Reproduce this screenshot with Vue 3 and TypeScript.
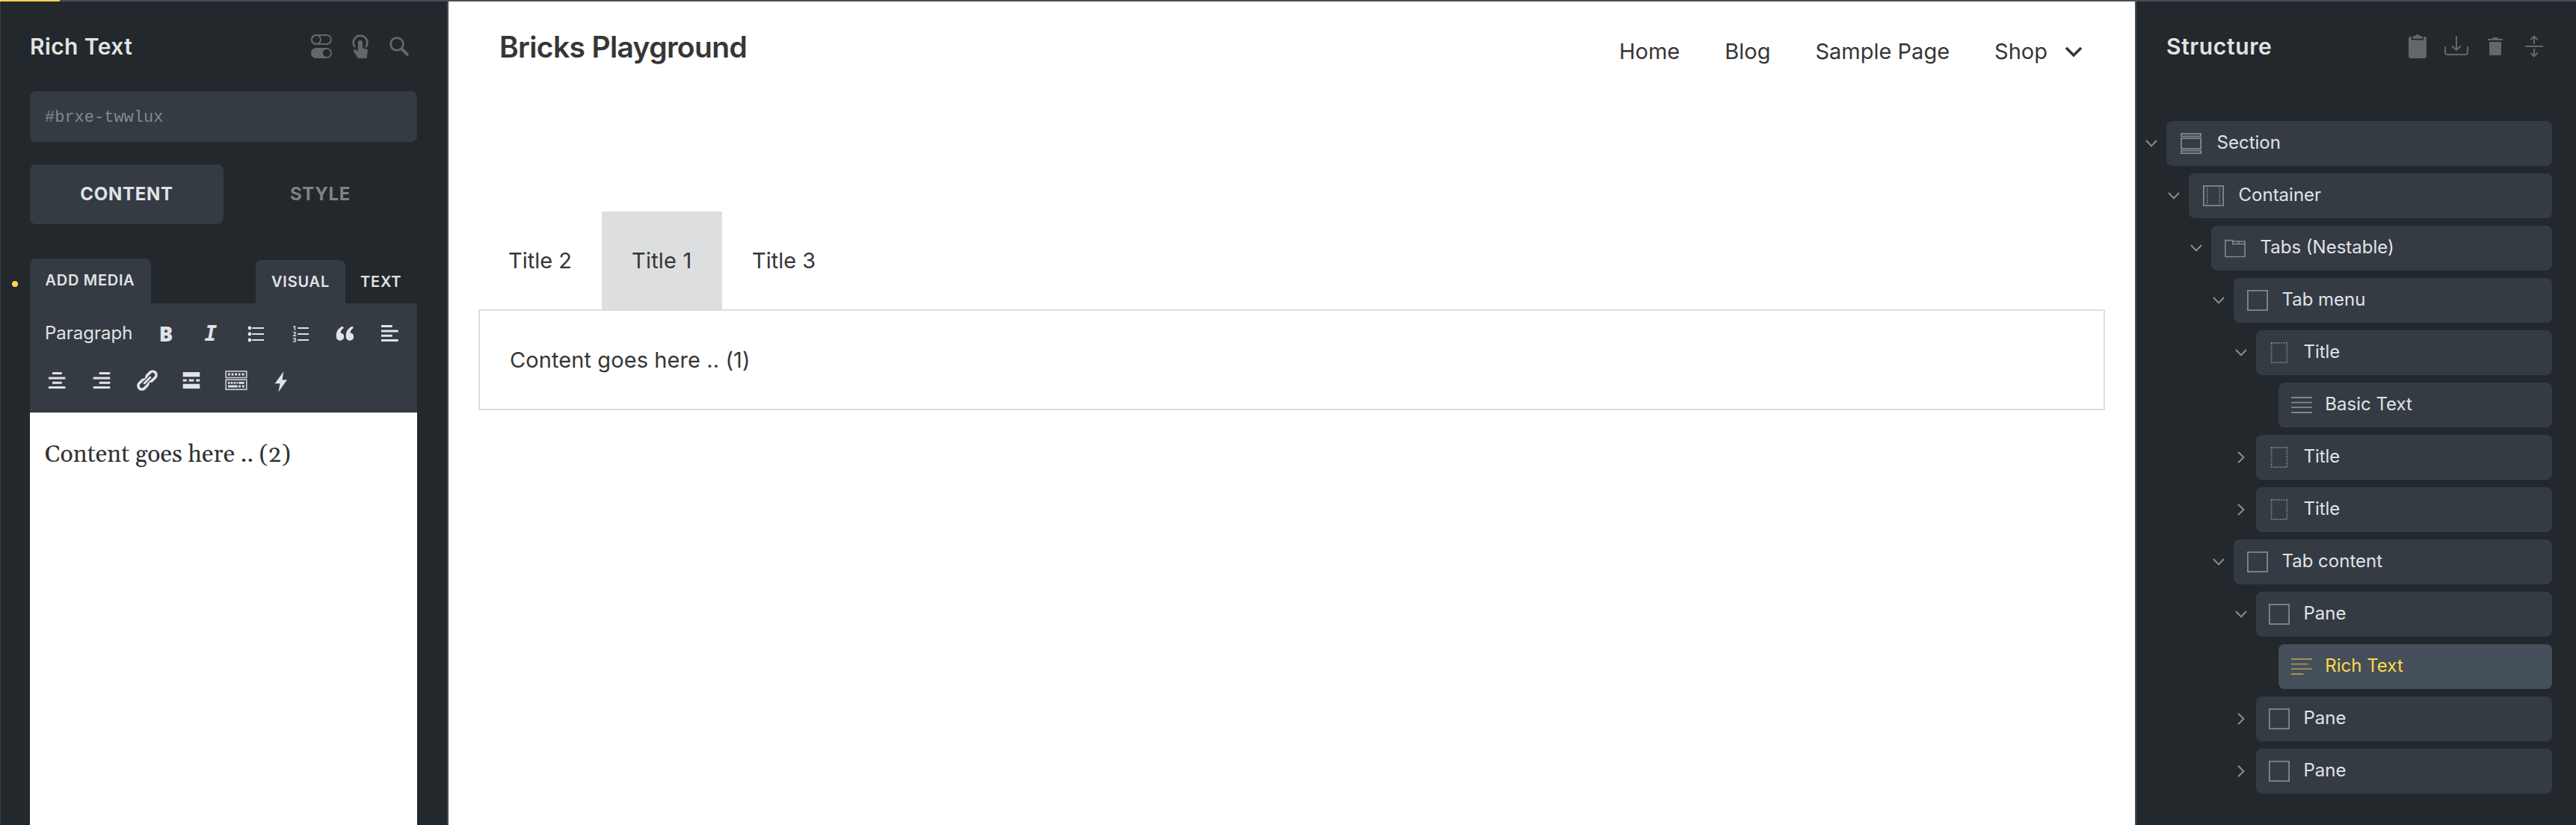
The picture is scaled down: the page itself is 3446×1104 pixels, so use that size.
<script setup lang="ts">
type IconName = 'section' | 'container' | 'tabs' | 'block' | 'div' | 'text' | 'rich'

interface TreeNode {
  label: string
  icon: IconName
  level: number
  toggle?: 'open' | 'closed'
  active?: boolean
}

const tree: TreeNode[] = [
  { label: 'Section', icon: 'section', level: 0, toggle: 'open' },
  { label: 'Container', icon: 'container', level: 1, toggle: 'open' },
  { label: 'Tabs (Nestable)', icon: 'tabs', level: 2, toggle: 'open' },
  { label: 'Tab menu', icon: 'block', level: 3, toggle: 'open' },
  { label: 'Title', icon: 'div', level: 4, toggle: 'open' },
  { label: 'Basic Text', icon: 'text', level: 5 },
  { label: 'Title', icon: 'div', level: 4, toggle: 'closed' },
  { label: 'Title', icon: 'div', level: 4, toggle: 'closed' },
  { label: 'Tab content', icon: 'block', level: 3, toggle: 'open' },
  { label: 'Pane', icon: 'block', level: 4, toggle: 'open' },
  { label: 'Rich Text', icon: 'rich', level: 5, active: true },
  { label: 'Pane', icon: 'block', level: 4, toggle: 'closed' },
  { label: 'Pane', icon: 'block', level: 4, toggle: 'closed' },
]

const navItems = ['Home', 'Blog', 'Sample Page', 'Shop']
const siteTabs = [
  { label: 'Title 2', active: false },
  { label: 'Title 1', active: true },
  { label: 'Title 3', active: false },
]
</script>

<template>
  <div class="builder">
    <div class="progress"><div class="progress-fill"></div></div>

    <div class="columns">
      <aside class="panel">
        <header class="panel-head">
          <h2 class="panel-title rich">Rich Text</h2>
          <div class="head-icons">
            <svg width="28" height="32" viewBox="0 0 28 32">
              <rect x="1" y="1" width="26" height="12" rx="6" class="line2" />
              <circle cx="7" cy="7" r="6" class="line2" />
              <rect x="0" y="18" width="28" height="14" rx="7" class="fill" />
              <circle cx="21" cy="25" r="5" class="hole" />
            </svg>
            <svg class="hand" width="22" height="32" viewBox="0 0 22 32">
              <path d="M4 17.1A9.3 9.3 0 1 1 18 17.1" class="line3" />
              <path d="M7.8 11a3.1 3.1 0 0 1 6.2 0v7.2l5.2 1.4q2 .6 1.7 2.8L19.6 32H8L2 22.8q-1-2.2.8-2.8 1.8-.4 3 1.2l2 2.2z" class="fill" />
            </svg>
            <svg class="search" width="26" height="32" viewBox="0 0 26 32">
              <circle cx="10" cy="13" r="8.4" class="line3" />
              <path d="M16 19l9 9" class="line4" />
            </svg>
          </div>
        </header>

        <div class="panel-body">
          <div class="id-field">#brxe-twwlux</div>

          <div class="mode-tabs">
            <div class="mode-tab on">CONTENT</div>
            <div class="mode-tab">STYLE</div>
          </div>

          <div class="editor">
            <span class="dot"></span>
            <div class="editor-tabs">
              <div class="etab media">ADD MEDIA</div>
              <div class="etab visual">VISUAL</div>
              <div class="etab text">TEXT</div>
            </div>

            <div class="toolbar">
              <div class="tool-row">
                <div class="format">Paragraph</div>
                <div class="tool bold">B</div>
                <div class="tool italic">I</div>
                <div class="tool">
                  <svg width="40" height="40" viewBox="0 0 40 40">
                    <circle v-for="y in [12, 20, 28]" :key="y" cx="12" :cy="y" r="2.4" class="ink" />
                    <path d="M15.3 12H31M15.3 20H31M15.3 28H31" class="ink-line" />
                  </svg>
                </div>
                <div class="tool">
                  <svg width="40" height="40" viewBox="0 0 40 40">
                    <text v-for="n in 3" :key="n" x="12" :y="7 + n * 8" class="num">{{ n }}</text>
                    <path d="M16.3 12H31M16.3 20H31M16.3 28H31" class="ink-line" />
                  </svg>
                </div>
                <div class="tool">
                  <svg width="40" height="40" viewBox="0 0 40 40">
                    <path v-for="x in [0, 13]" :key="x" :transform="`translate(${x} 0)`" d="M16.4 9.6C10.4 12 7.7 17 7.7 22.8c0 3.8 2.2 6 5.2 6a5.3 5.3 0 0 0 5.3-5.3c0-2.8-1.9-4.8-4.6-5 .2-3 1.7-5 4.2-6.6z" class="ink" />
                  </svg>
                </div>
                <div class="tool">
                  <svg width="40" height="40" viewBox="0 0 40 40">
                    <path d="M8 9.5h14.7M8 16h22.7M8 22.2h14.7M8 28.6h22.7" class="bar" />
                  </svg>
                </div>
              </div>
              <div class="tool-row">
                <div class="tool">
                  <svg width="40" height="40" viewBox="0 0 40 40">
                    <path d="M14 10.5h12.7M9 17h22.3M14 23.2h12.7M9 29.6h22.3" class="bar" />
                  </svg>
                </div>
                <div class="tool">
                  <svg width="40" height="40" viewBox="0 0 40 40">
                    <path d="M16.7 10.5h14.6M8.7 17h22.6M16.7 23.2h14.6M8.7 29.6h22.6" class="bar" />
                  </svg>
                </div>
                <div class="tool">
                  <svg width="40" height="40" viewBox="0 0 40 40">
                    <g transform="rotate(-45 21 20)">
                      <rect x="6" y="15.2" width="14.8" height="9.6" rx="4.8" class="chain" />
                      <rect x="21.2" y="15.2" width="14.8" height="9.6" rx="4.8" class="chain" />
                      <path d="M15.5 20h11" class="chain-gap" />
                      <path d="M15.5 20h11" class="chain-bar" />
                    </g>
                  </svg>
                </div>
                <div class="tool">
                  <svg width="40" height="40" viewBox="0 0 40 40">
                    <path d="M8.7 9h22.6v6.2H8.7zM8.7 18.6h5v3h-5zM16.6 18.6h6.8v3h-6.8zM26.3 18.6h5v3h-5zM8.7 24.8h22.6V31H8.7z" class="ink" />
                  </svg>
                </div>
                <div class="tool">
                  <svg width="40" height="40" viewBox="0 0 40 40">
                    <rect x="6.2" y="7.8" width="27.6" height="8.6" class="key-frame" />
                    <rect x="6.2" y="19.2" width="27.6" height="13" class="key-frame" />
                    <path d="M9 10.6h2.8v3H9zM13.6 10.6h2.8v3h-2.8zM18.2 10.6H21v3h-2.8zM22.8 10.6h2.8v3h-2.8zM27.6 10.6h3v3h-3zM9 22h2.6v2.8H9zM12.8 22h2.6v2.8h-2.6zM16.6 22h2.6v2.8h-2.6zM20.4 22h1.6v2.8h-1.6zM23.2 22h7.5v2.8h-7.5zM9 26.6h12.8v2.8H9zM23.2 26.6h2.8v2.8h-2.8zM27.8 26.6h2.9v2.8h-2.9z" class="ink" />
                  </svg>
                </div>
                <div class="tool">
                  <svg width="40" height="40" viewBox="0 0 40 40">
                    <path d="M23.5 8L11.7 24.2h6.9L16.4 35.8 28 19.2h-6.4z" class="ink" />
                  </svg>
                </div>
              </div>
            </div>

            <div class="document">Content goes here .. (2)</div>
          </div>
        </div>
      </aside>

      <main class="canvas">
        <header class="site-head">
          <div class="brand">Bricks Playground</div>
          <nav class="nav">
            <a v-for="item in navItems" :key="item">{{ item }}</a>
            <svg class="caret" width="24" height="16" viewBox="0 0 24 16">
              <path d="M2 3l10 10L22 3" />
            </svg>
          </nav>
        </header>
        <section class="site-tabs">
          <div class="tab-menu">
            <div v-for="t in siteTabs" :key="t.label" class="tab-title" :class="{ on: t.active }">{{ t.label }}</div>
          </div>
          <div class="tab-pane">Content goes here .. (1)</div>
        </section>
      </main>

      <aside class="structure">
        <header class="structure-head">
          <h2 class="panel-title struct">Structure</h2>
          <div class="head-icons">
            <svg width="24" height="32" viewBox="0 0 24 32">
              <rect x="0" y="3" width="24" height="29" rx="2.4" class="fill" />
              <path d="M4.6 2v4.6h14.8V2" class="cut" />
              <path d="M5.8 5V3.4Q5.8 2 7.6 2h1.6Q10 0 12 0t2.8 2h1.6q1.8 0 1.8 1.4V5z" class="fill" />
            </svg>
            <svg class="download" width="32" height="32" viewBox="0 0 32 32">
              <path d="M16 2v19M10 15.2l6 6 6-6M1 16v8q0 3 3 3h24q3 0 3-3v-8" class="line2" />
            </svg>
            <svg class="trash" width="20" height="32" viewBox="0 0 20 32">
              <path d="M0 6h5.4q1-2 3-2h3.2q2 0 3 2H20v2H0zM2 10h16v15.4q0 2.6-2.6 2.6H4.6Q2 28 2 25.4z" class="fill" />
            </svg>
            <svg class="expand" width="24" height="32" viewBox="0 0 24 32">
              <path d="M0 16h24M12 13V3M7.4 7.2L12 2.6l4.6 4.6M12 19v10M7.4 24.8l4.6 4.6 4.6-4.6" class="line2" />
            </svg>
          </div>
        </header>

        <ul class="tree">
          <li v-for="(node, i) in tree" :key="i" class="node" :style="{ '--level': node.level }">
            <span class="toggle">
              <svg v-if="node.toggle === 'open'" width="18" height="18" viewBox="0 0 18 18"><path d="M2 5l7 7.4L16 5" /></svg>
              <svg v-else-if="node.toggle === 'closed'" width="18" height="18" viewBox="0 0 18 18"><path d="M5 1.8L12.4 9 5 16.2" /></svg>
            </span>
            <div class="item" :class="{ active: node.active }">
              <svg class="item-icon" width="28" height="28" viewBox="0 0 28 28">
                <path v-if="node.icon === 'section'" d="M.9.9h26.2v3.4H.9zM.9 7.2h26.2v13.6H.9zM.9 23.7h26.2v3.4H.9z" />
                <template v-else-if="node.icon === 'container'">
                  <path d="M.9.9h26.2v26.2H.9z" />
                  <path d="M5.7 3.5v21.4M22.3 3.5v21.4" class="dots" />
                </template>
                <path v-else-if="node.icon === 'tabs'" d="M.9 3.6h9.9v4.9h16.3v17H.9zM10.8 5h16.3v4M19 5v3.5" class="thin" />
                <path v-else-if="node.icon === 'block'" d="M.9.9h26.2v26.2H.9z" />
                <path v-else-if="node.icon === 'div'" d="M3.6.8h20.8v26.4H3.6z" class="dots" />
                <path v-else-if="node.icon === 'text'" d="M0 4h28M0 10.6h28M0 17.2h28M0 24h28" />
                <path v-else d="M0 4h28M0 10.6h23M0 17.2h28M0 24h16.4" />
              </svg>
              <span>{{ node.label }}</span>
            </div>
          </li>
        </ul>
      </aside>
    </div>
  </div>
</template>

<style>
body {
  margin: 0;
  background: #fff;
}
</style>

<style scoped>
.builder {
  display: flex;
  flex-direction: column;
  width: 3446px;
  height: 1104px;
  overflow: hidden;
  font-family: Inter, "Liberation Sans", sans-serif;
  color: #e1e3e4;
}
.progress {
  height: 2px;
  background: #454f59;
}
.progress-fill {
  width: 80px;
  height: 2px;
  background: #ffd64f;
}
.columns {
  flex: 1;
  display: flex;
  min-height: 0;
}
svg {
  display: block;
}

/* shared header */
.panel-title {
  margin: 0;
  font-size: 30px;
  line-height: 40px;
  font-weight: 600;
  letter-spacing: 0.4px;
}
.panel-title.struct {
  letter-spacing: 0.62px;
}
.head-icons {
  display: flex;
  align-items: center;
}
.fill {
  fill: #62676a;
}
.hole {
  fill: #23282c;
}
.line2,
.line3,
.line4 {
  fill: none;
  stroke: #62676a;
  stroke-width: 2;
}
.line3 {
  stroke-width: 2.8;
}
.line4 {
  stroke-width: 4;
}
.cut {
  fill: none;
  stroke: #23282c;
  stroke-width: 1.6;
}

/* left panel */
.panel {
  box-sizing: border-box;
  width: 600px;
  flex: none;
  display: flex;
  flex-direction: column;
  background: #23282c;
  border-left: 1px solid #363f46;
  border-right: 2px solid #454f59;
}
.panel-head {
  display: flex;
  align-items: center;
  justify-content: space-between;
  height: 120px;
  padding: 0 51px 0 39px;
}
.hand {
  margin-left: 27px;
}
.search {
  margin-left: 28px;
}
.panel-body {
  flex: 1;
  display: flex;
  flex-direction: column;
  padding: 0 40px 0 39px;
}
.id-field {
  box-sizing: border-box;
  height: 68px;
  padding: 3px 20px 0;
  border-radius: 8px;
  background: #343b43;
  color: #84898d;
  font: 22px/65px "Liberation Mono", monospace;
}
.mode-tabs {
  display: flex;
  margin-top: 30px;
  height: 80px;
}
.mode-tab {
  flex: 1;
  border-radius: 8px;
  text-align: center;
  font-size: 24px;
  line-height: 79px;
  font-weight: 700;
  letter-spacing: 0.7px;
  color: #7f8386;
}
.mode-tab.on {
  background: #343b43;
  color: #e1e3e4;
}
.editor {
  position: relative;
  flex: 1;
  display: flex;
  flex-direction: column;
  margin-top: 46px;
}
.dot {
  position: absolute;
  left: -24px;
  top: 30px;
  width: 8px;
  height: 8px;
  border-radius: 50%;
  background: #ffd64f;
}
.editor-tabs {
  display: flex;
  align-items: flex-end;
  height: 60px;
}
.etab {
  box-sizing: border-box;
  height: 58px;
  border-radius: 8px 8px 0 0;
  font-size: 20px;
  line-height: 59px;
  font-weight: 600;
  letter-spacing: 0.8px;
}
.media {
  width: 162px;
  height: 60px;
  margin-right: auto;
  padding-left: 20.5px;
  letter-spacing: 0.7px;
  background: #343b43;
}
.visual {
  width: 120px;
  padding-left: 21px;
  background: #343b43;
}
.text {
  width: 96px;
  padding-left: 20px;
}
.toolbar {
  box-sizing: border-box;
  height: 146px;
  padding: 10px 6px 0;
  background: #343b43;
  border-bottom: 1px solid #2b3138;
}
.tool-row {
  display: flex;
  align-items: center;
  height: 62px;
}
.format {
  box-sizing: border-box;
  width: 146px;
  padding: 0 0 2px 14px;
  font-size: 24px;
  line-height: 60px;
}
.tool {
  width: 60px;
  display: flex;
  align-items: center;
  justify-content: center;
}
.bold {
  font: 800 27.5px/40px "Open Sans", sans-serif;
}
.italic {
  font: italic 700 28px/40px "DejaVu Sans Mono", monospace;
}
.ink {
  fill: #e1e3e4;
}
.ink-line,
.bar {
  fill: none;
  stroke: #e1e3e4;
  stroke-width: 2;
}
.bar {
  stroke-width: 3;
}
.num {
  fill: #e1e3e4;
  font: 700 8.5px "Open Sans", sans-serif;
  text-anchor: middle;
}
.chain {
  fill: none;
  stroke: #e1e3e4;
  stroke-width: 3.6;
}
.chain-gap {
  stroke: #343b43;
  stroke-width: 5.4;
  stroke-linecap: round;
}
.chain-bar {
  stroke: #e1e3e4;
  stroke-width: 2.8;
  stroke-linecap: round;
}
.key-frame {
  fill: none;
  stroke: #bfc3c6;
  stroke-width: 1.8;
}
.document {
  flex: 1;
  padding: 27px 20px 0;
  background: #fff;
  color: #333;
  font: 32px/60px Georgia, Gelasio, "Liberation Serif", serif;
}

/* page preview */
.canvas {
  flex: 1;
  background: #fff;
  color: #363636;
}
.site-head {
  display: flex;
  justify-content: space-between;
  padding: 31px 70px 0 68px;
  height: 250px;
}
.brand {
  font-size: 39px;
  line-height: 60px;
  font-weight: 600;
  letter-spacing: -0.65px;
}
.nav {
  display: flex;
  align-items: center;
  gap: 60px;
  height: 71px;
  font-size: 29px;
  line-height: 60px;
}
.caret {
  margin-left: -37px;
}
.caret path {
  fill: none;
  stroke: #363636;
  stroke-width: 3.6;
}
.site-tabs {
  margin: 0 40px;
}
.tab-menu {
  display: flex;
}
.tab-title {
  box-sizing: border-box;
  height: 131px;
  padding: 0 40px;
  font-size: 29px;
  line-height: 132px;
}
.tab-title.on {
  width: 161px;
  letter-spacing: 0.2px;
  background: #dddedf;
}
.tab-pane {
  box-sizing: border-box;
  height: 135px;
  padding-left: 40px;
  border: 2px solid #ddd;
  font-size: 29px;
  line-height: 132px;
  letter-spacing: 0.09px;
}

/* structure panel */
.structure {
  box-sizing: border-box;
  width: 590px;
  flex: none;
  background: #23282c;
  border-left: 2px solid #454f59;
}
.structure-head {
  display: flex;
  align-items: center;
  justify-content: space-between;
  height: 120px;
  padding: 0 44px 0 40px;
}
.download {
  margin-left: 24px;
}
.trash {
  margin-left: 26px;
}
.expand {
  margin-left: 30px;
}
.tree {
  display: flex;
  flex-direction: column;
  gap: 10px;
  margin: 0;
  padding: 40px 32px 0 0;
  list-style: none;
}
.node {
  display: flex;
  padding-left: calc(var(--level) * 30px);
}
.toggle {
  width: 40px;
  display: flex;
  align-items: center;
  justify-content: center;
}
.toggle path {
  fill: none;
  stroke: #8a8e91;
  stroke-width: 2;
}
.item {
  flex: 1;
  display: flex;
  align-items: center;
  height: 60px;
  padding-left: calc(19px - var(--level) * 0.4px);
  gap: calc(20.6px - var(--level) * 0.65px);
  border-radius: 8px;
  background: #343b43;
  box-sizing: border-box;
  font-size: 24px;
  line-height: 58px;
}
.item span {
  padding-bottom: 2px;
}
.item-icon path {
  fill: none;
  stroke: #83888c;
  stroke-width: 1.8;
}
.item-icon path.thin {
  stroke-width: 1.6;
}
.item-icon path.dots {
  stroke-width: 1.7;
  stroke-dasharray: 1.7 1.5;
}
.item.active {
  background: #454f59;
  color: #ffd64f;
}
.item.active .item-icon path {
  stroke: #a2935a;
}
</style>
